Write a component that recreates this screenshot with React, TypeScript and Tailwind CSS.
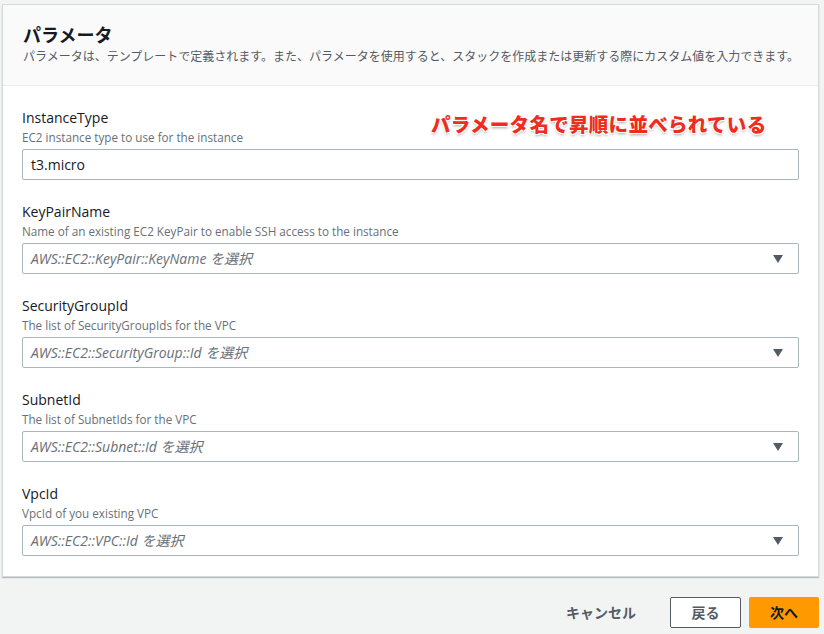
const font = { fontFamily: '"Open Sans", "Noto Sans CJK JP", sans-serif' };

interface Param {
  name: string;
  description: string;
  placeholder?: string;
  value?: string;
}

const params: Param[] = [
  { name: "InstanceType", description: "EC2 instance type to use for the instance", value: "t3.micro" },
  {
    name: "KeyPairName",
    description: "Name of an existing EC2 KeyPair to enable SSH access to the instance",
    placeholder: "AWS::EC2::KeyPair::KeyName を選択",
  },
  {
    name: "SecurityGroupId",
    description: "The list of SecurityGroupIds for the VPC",
    placeholder: "AWS::EC2::SecurityGroup::Id を選択",
  },
  { name: "SubnetId", description: "The list of SubnetIds for the VPC", placeholder: "AWS::EC2::Subnet::Id を選択" },
  { name: "VpcId", description: "VpcId of you existing VPC", placeholder: "AWS::EC2::VPC::Id を選択" },
];

function Field({ p }: { p: Param }) {
  return (
    <div className="flex flex-col">
      <div className="text-[14px] leading-[20px] text-[#16191f]">{p.name}</div>
      <div className="text-[11.7px] leading-[16px] text-[#687078] mt-[1px]">{p.description}</div>
      {p.value ? (
        <div className="mt-[4px] h-[31px] border border-[#aab7b8] rounded-[2px] flex items-center px-[8px] text-[14px] text-[#16191f]">
          {p.value}
        </div>
      ) : (
        <div className="mt-[4px] h-[31px] border border-[#aab7b8] rounded-[2px] flex items-center justify-between pl-[8px] pr-[14px]">
          <span className="italic text-[14px] text-[#687078]">{p.placeholder}</span>
          <svg width="12" height="10" viewBox="0 0 12 10">
            <path d="M1 1 L11 1 L6 9 Z" fill="#545b64" />
          </svg>
        </div>
      )}
    </div>
  );
}

export default function App() {
  return (
    <div className="w-[824px] h-[634px] bg-[#f2f3f3] pt-[4px] pl-[2px] pr-[5px] overflow-hidden" style={font}>
      <div className="relative bg-white border border-[#d5dbdb] shadow-[0_1px_1px_rgba(0,28,36,0.25)]">
        <div className="bg-[#fafafa] border-b border-[#eaeded] px-[20px] pt-[18px] pb-[19px]">
          <h2 className="text-[18px] leading-[24px] font-bold text-[#16191f]">パラメータ</h2>
          <p className="text-[12px] leading-[18px] text-[#545b64] mt-[1px] whitespace-nowrap">
            パラメータは、テンプレートで定義されます。また、パラメータを使用すると、スタックを作成または更新する際にカスタム値を入力できます。
          </p>
        </div>
        <div className="px-[19px] pt-[22px] pb-[20px] flex flex-col gap-[22px]">
          {params.map((p) => (
            <Field key={p.name} p={p} />
          ))}
        </div>
        <div
          className="absolute left-[428px] top-[104px] text-[19.5px] font-black text-[#ee2d1c] tracking-[0.3px]"
          style={{
            fontFamily: '"Noto Sans CJK JP", sans-serif',
            textShadow:
              "1px 1px 0 #fff, -1px -1px 0 #fff, 1px -1px 0 #fff, -1px 1px 0 #fff, 0 2px 3px rgba(0,0,0,0.35)",
          }}
        >
          パラメータ名で昇順に並べられている
        </div>
      </div>
      <div className="flex justify-end items-center mt-[20px] gap-[8px]">
        <button className="h-[31px] px-[20px] text-[14px] font-bold text-[#545b64] mr-[6px]">キャンセル</button>
        <button className="h-[31px] w-[71px] border border-[#545b64] rounded-[2px] bg-white text-[14px] font-bold text-[#545b64]">
          戻る
        </button>
        <button className="h-[31px] w-[70px] rounded-[2px] bg-[#ff9900] text-[14px] font-bold text-[#16191f]">
          次へ
        </button>
      </div>
    </div>
  );
}
